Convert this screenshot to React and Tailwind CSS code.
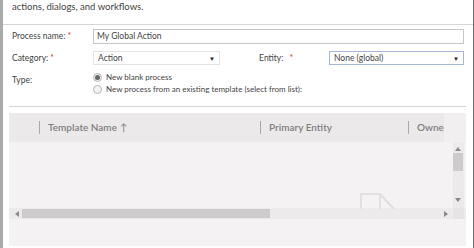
import { useState } from 'react'

function Radio({ checked }) {
  return (
    <span className="flex h-[9px] w-[9px] items-center justify-center rounded-full border border-[#b5b5b5] bg-[#f2f2f2]">
      {checked && <span className="h-[5px] w-[5px] rounded-full bg-[#666]" />}
    </span>
  )
}

function Arrow({ dir }) {
  const pts = {
    up: '0,4 3,0 6,4',
    down: '0,0 6,0 3,4',
    left: '4,0 4,6 0,3',
    right: '0,0 0,6 4,3',
  }[dir]
  const w = dir === 'up' || dir === 'down' ? 6 : 4
  const h = dir === 'up' || dir === 'down' ? 4 : 6
  return (
    <svg width={w} height={h} viewBox={`0 0 ${w} ${h}`}>
      <polygon points={pts} fill="#8a8a8a" />
    </svg>
  )
}

export default function App() {
  const [type, setType] = useState('blank')

  return (
    <div className="flex h-[248px] w-[474px] overflow-hidden bg-white font-['Lato',sans-serif] text-[#444]">
      <div className="w-[3px] shrink-0 bg-[#a9a9a9]" />

      <div className="flex flex-1 flex-col">
        {/* Description */}
        <div className="h-[25px] border-b border-[#d6d6d6] pl-[9px] pt-[1px] text-[9.5px] leading-[12px]">
          actions, dialogs, and workflows.
        </div>

        {/* Form */}
        <div className="flex flex-col pl-[9px] pr-[9px] pt-[4px] text-[8.5px]">
          <div className="flex h-[15px] items-center">
            <div className="w-[81px] shrink-0">
              Process name: <span className="text-[#d0342c]">*</span>
            </div>
            <div className="flex h-full flex-1 items-center border border-[#c6c6c6] px-[3px]">
              My Global Action
            </div>
          </div>

          <div className="mt-[7px] flex h-[14px] items-center">
            <div className="w-[81px] shrink-0">
              Category: <span className="text-[#d0342c]">*</span>
            </div>
            <div className="flex h-full w-[127px] items-center justify-between border border-[#e4e4e4] px-[4px]">
              <span>Action</span>
              <span className="text-[6px] text-[#222]">▼</span>
            </div>
            <div className="flex w-[109px] justify-end pr-[36px]">
              Entity: <span className="pl-[6px] text-[#d0342c]">*</span>
            </div>
            <div className="flex h-full flex-1 items-center justify-between border border-[#a9b7d6] px-[4px]">
              <span>None (global)</span>
              <span className="text-[6px] text-[#222]">▼</span>
            </div>
          </div>

          <div className="mt-[6px] flex">
            <div className="w-[81px] shrink-0 pt-[3px]">Type:</div>
            <div className="flex flex-col text-[8px]">
              <label className="flex h-[12px] items-center gap-[4px]" onClick={() => setType('blank')}>
                <Radio checked={type === 'blank'} />
                <span>New blank process</span>
              </label>
              <label className="flex h-[12px] items-center gap-[4px]" onClick={() => setType('template')}>
                <Radio checked={type === 'template'} />
                <span>New process from an existing template (select from list):</span>
              </label>
            </div>
          </div>
        </div>

        {/* Grid */}
        <div className="ml-[6px] mr-[7px] mt-[11px] flex flex-1 flex-col border-t border-[#d4d4d4] pt-[6px]">
          <div className="flex h-[29px] text-[10px] font-semibold text-[#808080]">
            <div className="flex flex-1 items-center bg-[#ebe9ea]">
              <div className="flex w-[251px] shrink-0 items-center pl-[30px]">
                <span className="mr-[8px] h-[13px] w-px bg-[#aaa]" />
                Template Name <span className="ml-[3px] font-normal">↑</span>
              </div>
              <div className="flex w-[148px] shrink-0 items-center">
                <span className="mr-[8px] h-[13px] w-px bg-[#aaa]" />
                Primary Entity
              </div>
              <div className="flex items-center">
                <span className="mr-[8px] h-[13px] w-px bg-[#aaa]" />
                Owne
              </div>
            </div>
            <div className="w-[22px] bg-[#f1eff0]" />
          </div>

          <div className="flex flex-1 flex-col bg-[#f4f2f3]">
            <div className="flex h-[66px]">
              <div className="relative flex-1">
                <svg className="absolute left-[351px] top-[51px]" width="36" height="16" viewBox="0 0 36 16">
                  <path d="M1 16 V1 H20 V16 M20 1 L34 16" fill="none" stroke="#e2e0e1" strokeWidth="2" />
                </svg>
              </div>
              <div className="mr-[2px] flex w-[11px] flex-col items-center bg-[#eceaeb] pt-[5px]">
                <Arrow dir="up" />
                <div className="mt-[2px] h-[18px] w-[10px] bg-[#cdcbcc]" />
                <div className="flex-1" />
                <div className="pb-[6px]">
                  <Arrow dir="down" />
                </div>
              </div>
            </div>
            <div className="flex h-[11px] items-center bg-[#eceaeb]">
              <div className="flex w-[13px] justify-end pr-[3px]">
                <Arrow dir="left" />
              </div>
              <div className="h-[9px] w-[248px] bg-[#cdcbcc]" />
              <div className="flex flex-1 justify-end pr-[5px]">
                <Arrow dir="right" />
              </div>
              <div className="mr-[2px] h-full w-[11px] bg-[#e6e4e5]" />
            </div>
            <div className="flex-1" />
          </div>
          <div className="h-[2px] bg-white" />
        </div>
      </div>

      <div className="w-[4px] shrink-0 bg-[#6f6f6f]" />
    </div>
  )
}
